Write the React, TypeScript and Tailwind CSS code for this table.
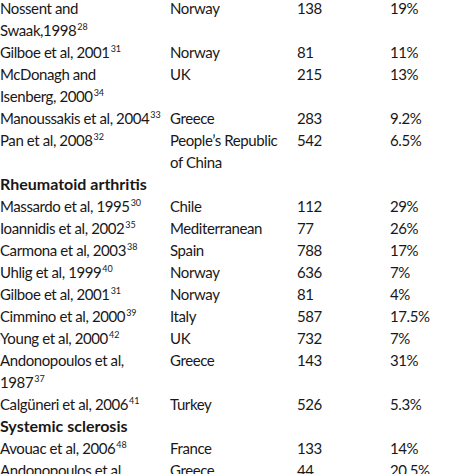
function Ref({ n }: { n: string }) {
  return <sup className="text-[9px] ml-px -top-[6px] tracking-normal">{n}</sup>;
}

type Row = { study: React.ReactNode; country?: React.ReactNode; n?: string; pct?: string; heading?: boolean };

const data: Row[] = [
  { study: <>Nossent and<br />Swaak,1998<Ref n="28" /></>, country: 'Norway', n: '138', pct: '19%' },
  { study: <>Gilboe et al, 2001<Ref n="31" /></>, country: 'Norway', n: '81', pct: '11%' },
  { study: <>McDonagh and<br />Isenberg, 2000<Ref n="34" /></>, country: 'UK', n: '215', pct: '13%' },
  { study: <>Manoussakis et al, 2004<Ref n="33" /></>, country: 'Greece', n: '283', pct: '9.2%' },
  { study: <>Pan et al, 2008<Ref n="32" /></>, country: <>People’s Republic<br />of China</>, n: '542', pct: '6.5%' },
  { study: 'Rheumatoid arthritis', heading: true },
  { study: <>Massardo et al, 1995<Ref n="30" /></>, country: 'Chile', n: '112', pct: '29%' },
  { study: <>Ioannidis et al, 2002<Ref n="35" /></>, country: 'Mediterranean', n: '77', pct: '26%' },
  { study: <>Carmona et al, 2003<Ref n="38" /></>, country: 'Spain', n: '788', pct: '17%' },
  { study: <>Uhlig et al, 1999<Ref n="40" /></>, country: 'Norway', n: '636', pct: '7%' },
  { study: <>Gilboe et al, 2001<Ref n="31" /></>, country: 'Norway', n: '81', pct: '4%' },
  { study: <>Cimmino et al, 2000<Ref n="39" /></>, country: 'Italy', n: '587', pct: '17.5%' },
  { study: <>Young et al, 2000<Ref n="42" /></>, country: 'UK', n: '732', pct: '7%' },
  { study: <>Andonopoulos et al,<br />1987<Ref n="37" /></>, country: 'Greece', n: '143', pct: '31%' },
  { study: <>Calgüneri et al, 2006<Ref n="41" /></>, country: 'Turkey', n: '526', pct: '5.3%' },
  { study: 'Systemic sclerosis', heading: true },
  { study: <>Avouac et al, 2006<Ref n="48" /></>, country: 'France', n: '133', pct: '14%' },
  { study: <>Andonopoulos et al,<br />1987</>, country: 'Greece', n: '44', pct: '20.5%' },
];

export default function App() {
  return (
    <div className="w-[474px] h-[474px] overflow-hidden bg-white">
      <div
        className="-mt-[3px] grid grid-cols-[170px_127px_93px_1fr] text-[15px] leading-[22px] tracking-[-0.4px] text-[#1a1718]"
        style={{ fontFamily: 'Lato, "Open Sans", sans-serif' }}
      >
        {data.map((r, i) =>
          r.heading ? (
            <div key={i} className="col-span-4 font-bold text-[16px] tracking-normal">{r.study}</div>
          ) : (
            <div key={i} className="contents">
              <div className="whitespace-nowrap">{r.study}</div>
              <div className="whitespace-nowrap">{r.country}</div>
              <div>{r.n}</div>
              <div>{r.pct}</div>
            </div>
          )
        )}
      </div>
    </div>
  );
}
